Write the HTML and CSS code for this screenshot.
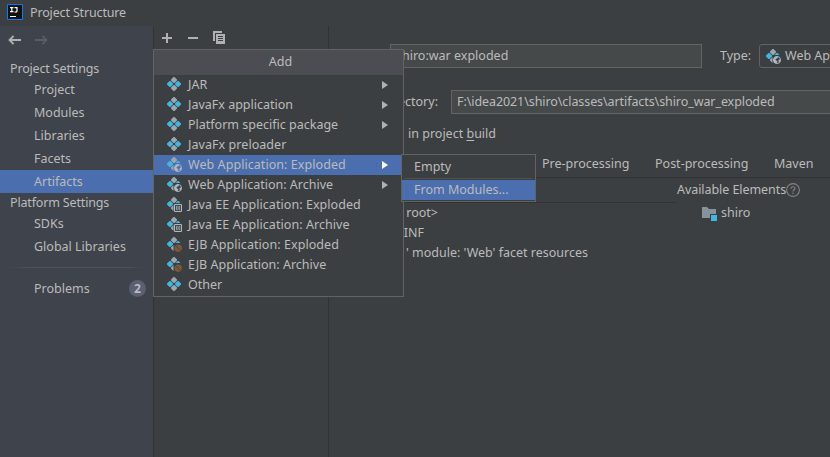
FILE: index.html
```html
<!DOCTYPE html>
<html lang="en">
<head>
<meta charset="utf-8">
<title>Project Structure</title>
<link rel="stylesheet" href="styles.css">
</head>
<body>
<svg class="defs" aria-hidden="true">
  <defs>
    <g id="artifact">
      <path fill="#9aa7b0" d="M6.500 0h1l2.500 2.500v1L7.500 6h-1L4 3.500v-1zM6.500 8h1l2.500 2.500v1L7.500 14h-1L4 11.500v-1z"/>
      <path fill="#40b6e0" d="M2.500 4h1L6 6.500v1L3.500 10h-1L0 7.500v-1zM10.500 4h1L14 6.500v1L11.500 10h-1L8 7.500v-1z"/>
    </g>
    <g id="cut">
      <path fill="#9aa7b0" d="M6.500 0h1l2.500 2.500v1L7.500 6h-1L4 3.500v-1zM4 10.500L6.500 8v6L4 11.500z"/>
      <path fill="#40b6e0" d="M2.500 4h1L6 6.500v1L3.500 10h-1L0 7.500v-1zM8.500 6l2-2h1l2 2z"/>
    </g>
    <g id="web">
      <use href="#cut"/>
      <circle cx="11" cy="11" r="3.600" fill="none" stroke="#aeb9c0" stroke-width=".9"/>
      <path fill="#aeb9c0" d="M7.300 10.800L9 7.800l3-.3-.5 1.800-2 .7.500 1.500 1.500.5-.5 1.500-1 1-2-1zM12.500 11l2-.8-.2 2.300-1.600 1.300z"/>
    </g>
    <g id="ee">
      <use href="#cut"/>
      <path fill="#3c3f41" stroke="#aeb9c0" d="M7.500 7.500h7v7h-7z"/>
      <path fill="none" stroke="#aeb9c0" stroke-width=".8" d="M10.800 9.400H9.400v3.300h1.400M9.400 11h1.400M13.300 9.400h-1.400v3.300h1.400M11.900 11h1.400"/>
    </g>
    <g id="ejb">
      <use href="#cut"/>
      <circle cx="11.200" cy="11.200" r="3.700" fill="#7c5738"/>
      <path stroke="#3c3f41" stroke-width=".8" d="M8.500 8.500l6 6"/>
    </g>
  </defs>
</svg>
<div class="window">
  <header class="titlebar">
    <svg class="logo" viewBox="0 0 16 16"><path fill="#111" stroke="#087cfa" d="M.5.500h15v15H.500z"/><path fill="none" stroke="#fff" stroke-width="1.200" d="M3 3.600h3.500M4.800 3v5M3 7.600h3.500M7.500 3.600H10V7q0 1.200-1.500 1H7.500"/><path stroke="#fff" d="M3 12.500h6"/></svg>
    <span class="t-title">Project Structure</span>
  </header>
  <div class="body">
    <nav class="sidebar">
      <div class="history">
        <svg viewBox="0 0 13 10"><path d="M13 5H1.500M5.500 1l-4 4 4 4"/></svg>
        <svg class="off" viewBox="0 0 13 10"><path d="M0 5h11.500M7.500 1l4 4-4 4"/></svg>
      </div>
      <div class="group">Project Settings</div>
      <div class="item">Project</div>
      <div class="item">Modules</div>
      <div class="item">Libraries</div>
      <div class="item">Facets</div>
      <div class="item selected">Artifacts</div>
      <div class="group second">Platform Settings</div>
      <div class="item">SDKs</div>
      <div class="item">Global Libraries</div>
      <div class="rule"></div>
      <div class="item problems"><span>Problems</span><b class="badge">2</b></div>
    </nav>
    <section class="list">
      <div class="tools">
        <svg viewBox="0 0 14 14"><path d="M7 2v10M2 7h10"/></svg>
        <svg viewBox="0 0 14 14"><path d="M2 7h10"/></svg>
        <svg viewBox="0 0 14 14"><path fill="#afb1b3" stroke="none" d="M1 0h9v2H3v8H1zM4 3h9v10H4z"/><path class="lines" d="M6 5.500h5M6 7.500h5M6 9.500h5"/></svg>
      </div>
    </section>
    <main class="editor">
      <div class="name-row">
        <div class="field name">shiro:war exploded</div>
        <span class="label">Type:</span>
        <div class="field combo"><svg class="ico" viewBox="0 0 15 15"><use href="#web"/></svg><span>Web Application: Exploded</span></div>
      </div>
      <div class="dir-row">
        <span class="label">Output directory:</span>
        <div class="field dir">F:\idea2021\shiro\classes\artifacts\shiro_war_exploded</div>
      </div>
      <div class="build"><span class="lead">Include</span><span>in project <u>b</u>uild</span></div>
      <div class="tabs"><span class="pre">Pre-processing</span><span class="post">Post-processing</span><span>Maven</span></div>
      <div class="panes">
        <div class="output">
          <div class="bar"></div>
          <div class="tree"><span class="r1"><span class="lead">&lt;output</span>root&gt;</span><span class="r2"><span class="lead">WEB-</span>INF</span><span class="r3"><span class="lead">'shiro</span>' module: 'Web' facet resources</span></div>
        </div>
        <div class="available">
          <div class="heading"><span>Available Elements</span><svg class="help" viewBox="0 0 14 14"><circle cx="7" cy="7" r="6.400"/><path d="M5 5.700q0-2 2-2t2 1.700c0 1.300-2 1.400-2 3M7 9.500V11"/></svg></div>
          <div class="module"><svg viewBox="0 0 16 14"><path fill="#87939a" d="M0 0h5l2 2h7v5H8v4H0z"/><path fill="#40b6e0" d="M9 8h6v6H9z"/></svg><span>shiro</span></div>
        </div>
      </div>
    </main>
  </div>
  <div class="menu">
    <div class="menu-title">Add</div>
    <div class="row"><svg class="ico" viewBox="0 0 15 15"><use href="#artifact"/></svg><span>JAR</span><i></i></div>
    <div class="row"><svg class="ico" viewBox="0 0 15 15"><use href="#artifact"/></svg><span>JavaFx application</span><i></i></div>
    <div class="row"><svg class="ico" viewBox="0 0 15 15"><use href="#artifact"/></svg><span>Platform specific package</span><i></i></div>
    <div class="row"><svg class="ico" viewBox="0 0 15 15"><use href="#artifact"/></svg><span class="wide">JavaFx preloader</span></div>
    <div class="row active"><svg class="ico" viewBox="0 0 15 15"><use href="#web"/></svg><span class="wide">Web Application: Exploded</span><i></i></div>
    <div class="row"><svg class="ico" viewBox="0 0 15 15"><use href="#web"/></svg><span>Web Application: Archive</span><i></i></div>
    <div class="row"><svg class="ico" viewBox="0 0 15 15"><use href="#ee"/></svg><span class="wide">Java EE Application: Exploded</span></div>
    <div class="row"><svg class="ico" viewBox="0 0 15 15"><use href="#ee"/></svg><span class="wide">Java EE Application: Archive</span></div>
    <div class="row"><svg class="ico" viewBox="0 0 15 15"><use href="#ejb"/></svg><span class="wide">EJB Application: Exploded</span></div>
    <div class="row"><svg class="ico" viewBox="0 0 15 15"><use href="#ejb"/></svg><span>EJB Application: Archive</span></div>
    <div class="row"><svg class="ico" viewBox="0 0 15 15"><use href="#artifact"/></svg><span>Other</span></div>
  </div>
  <div class="submenu">
    <div class="empty">Empty</div>
    <div class="sep"></div>
    <div class="from">From Modules...</div>
  </div>
</div>
</body>
</html>
```
FILE: styles.css
```css
* { box-sizing: border-box; }
body { margin: 0; }
.defs { position: absolute; width: 0; height: 0; }
.window {
  position: relative; width: 830px; height: 457px; overflow: hidden;
  display: flex; flex-direction: column;
  background: #3c3f41; color: #bbbbbb;
  font: 12.5px/20px "Noto Sans", "Open Sans", sans-serif;
  white-space: nowrap;
}
svg { flex: none; display: block; }
.titlebar { height: 26px; flex: none; display: flex; align-items: center; padding-left: 7px; gap: 7px; }
.t-title { letter-spacing: -.15px; }
.logo { width: 16px; height: 16px; margin-top: -2px; }
.body { flex: 1; display: flex; min-height: 0; }

.sidebar { width: 153px; flex: none; background: #3f434b; }
.history { height: 32px; display: flex; gap: 14px; padding: 9px 0 0 8px; }
.history svg { width: 13px; height: 10px; fill: none; stroke: #afb1b3; stroke-width: 1.8; }
.history .off { stroke: #5b5e61; }
.group { height: 20px; padding-left: 10px; line-height: 22px; letter-spacing: -.16px; }
.group.second { height: 19px; line-height: 20px; }
.item { height: 23px; line-height: 23px; padding-left: 34px; }
.item.selected { background: #4b6eaf; }
.rule { height: 1px; margin: 9px 8px; background: linear-gradient(90deg, transparent, #515357 15%, #515357 85%, transparent); }
.problems { display: flex; align-items: center; justify-content: space-between; padding-right: 7px; }
.badge { width: 17px; height: 17px; border-radius: 50%; background: #5a5f73; font-size: 12px; line-height: 17px; text-align: center; }

.list { width: 176px; flex: none; border: solid #323232; border-width: 0 1px; }
.tools { display: flex; gap: 12px; padding: 5px 0 0 6px; }
.tools svg { width: 14px; height: 14px; stroke: #afb1b3; stroke-width: 2; fill: none; }
.tools .lines { stroke: #3c3f41; stroke-width: 1; }

.editor { flex: 1; min-width: 0; overflow: hidden; display: flex; flex-direction: column; }
.field { height: 24px; flex: none; border: 1px solid #646464; background: #45494a; line-height: 22px; padding-left: 5px; }
.name-row { display: flex; align-items: center; padding: 18px 0 0 61px; height: 42px; flex: none; }
.name { width: 312px; margin-right: 18px; }
.label { flex: none; }
.name-row .label { width: 39px; }
.combo { width: 220px; display: flex; align-items: center; gap: 4px; padding-left: 6px; border-radius: 3px; background: #3c3f41; }
.dir-row { display: flex; align-items: center; height: 24px; margin-top: 22px; }
.dir-row .label { width: 109px; text-align: right; margin-right: 13px; }
.dir { flex: 1; border-right: 0; letter-spacing: -.08px; }
.build { width: 167px; margin-top: 10px; height: 20px; display: flex; justify-content: flex-end; }
.lead { margin-right: 7px; }
.r2 .lead { margin-right: 3px; }
.r3 .lead { margin-right: 4px; }
.build u { text-underline-offset: 2px; }
.tabs { display: flex; height: 25px; margin-top: 9px; padding-left: 213px; line-height: 22px; border-bottom: 1px solid #323232; }
.pre { width: 113px; flex: none; }
.post { width: 119px; flex: none; }
.panes { display: flex; }
.output { width: 348px; flex: none; }
.bar { height: 25px; width: 347px; border-bottom: 1px solid #323232; }
.tree { display: flex; flex-direction: column; align-items: flex-end; }
.tree .r1 { margin-right: 239px; }
.tree .r2 { margin-right: 253px; }
.tree .r3 { margin-right: 89px; }
.heading { display: flex; align-items: center; height: 24px; }
.heading span { letter-spacing: -.06px; }
.help { width: 14px; height: 14px; fill: none; stroke: #7f8487; stroke-width: 1.1; }
.module { display: flex; align-items: center; height: 22px; padding-left: 25px; gap: 3px; }
.module svg { width: 16px; height: 14px; margin-top: 2px; }

.menu { position: absolute; left: 153px; top: 49px; width: 251px; height: 248px; border: 1px solid #616365; background: #3c3f41; }
.menu-title { height: 25px; line-height: 24px; background: #4b4d52; text-align: center; padding-left: 4px; }
.row { height: 20px; display: flex; align-items: center; padding: 0 15px 0 13px; }
.ico { width: 15px; height: 15px; }
.row .ico { margin: 0 6px 1px 0; }
.row i { margin-left: auto; border: solid transparent; border-width: 4px 0 4px 6px; border-left-color: #afb1b3; }
.wide { letter-spacing: .06px; }
.row.active { background: #4b6eaf; }
.row.active i { border-left-color: #fff; }
.submenu { position: absolute; left: 401px; top: 154px; width: 135px; height: 48px; border: 1px solid #616365; background: #3c3f41; }
.empty, .from { height: 20px; padding-left: 12px; }
.empty { height: 23px; line-height: 23px; }
.sep { height: 1px; margin: 0 3px 1px 3px; background: #515151; }
.from { background: #4b6eaf; }
```
